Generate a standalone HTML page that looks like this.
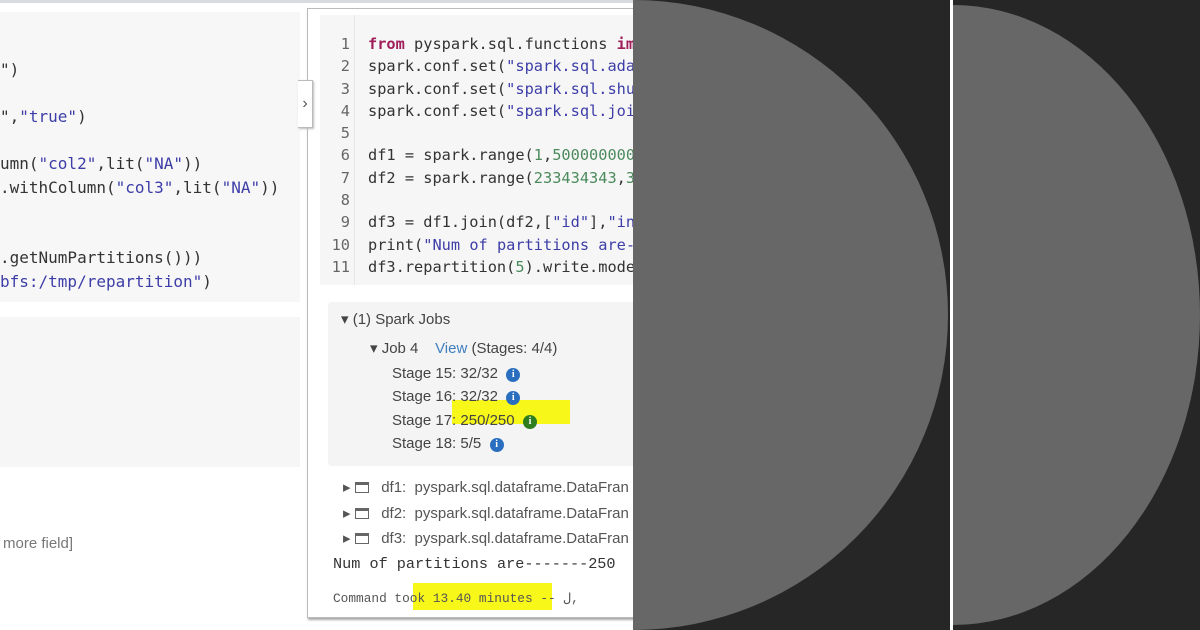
<!DOCTYPE html>
<html><head><meta charset="utf-8"><style>
*{margin:0;padding:0;box-sizing:border-box}
body{width:1200px;height:630px;overflow:hidden;background:#fff;position:relative;font-family:"DejaVu Sans Mono","Liberation Mono",monospace}
.abs{position:absolute;white-space:pre}
.mono{font-family:"DejaVu Sans Mono","Liberation Mono",monospace;font-size:15.3px;color:#333;letter-spacing:0px}
.sans{font-family:"Liberation Sans",sans-serif;font-size:15px;color:#444}
.s{color:#3d3da8}.n{color:#4b8a5c}.k{color:#a01e5a;font-weight:bold}
.info{display:inline-block;width:14px;height:14px;border-radius:50%;background:#2a6fbf;color:#fff;font:bold 10px "Liberation Serif",serif;text-align:center;line-height:14px;vertical-align:1px}
</style></head><body>
<div class="abs" style="left:0;top:0;width:640px;height:3px;background:#d8dce0"></div>
<div class="abs" style="left:0;top:12px;width:300px;height:290px;background:#f7f7f7"></div>
<div class="abs" style="left:0;top:317px;width:300px;height:150px;background:#f6f6f6"></div>
<div class="abs mono" style="left:0;top:58px;line-height:23.5px;font-size:16px">"<span></span>)
&nbsp;
",<span class="s">"true"</span>)
&nbsp;
umn(<span class="s">"col2"</span>,lit(<span class="s">"NA"</span>))
.withColumn(<span class="s">"col3"</span>,lit(<span class="s">"NA"</span>))
&nbsp;
&nbsp;
.getNumPartitions()))
<span class="s">bfs:/tmp/repartition"</span>)</div>
<div class="abs sans" style="left:3px;top:535px;color:#777">more field]</div>

<div class="abs" style="left:307px;top:8px;width:340px;height:610px;border:1px solid #bbb;box-shadow:1px 2px 2px #aaa;background:#fff"></div>
<div class="abs" style="left:298px;top:80px;width:15px;height:48px;background:#fff;border:1px solid #bbb;border-left:none;box-shadow:1px 1px 2px #bbb;font:16px 'Liberation Sans';color:#555;text-align:center;line-height:46px">›</div>
<div class="abs" style="left:320px;top:15px;width:320px;height:270px;background:#f6f6f6"></div>
<div class="abs" style="left:354px;top:15px;width:1px;height:270px;background:#e6e6e6"></div>
<div class="abs mono" style="left:330px;top:33px;line-height:22.3px;color:#666;text-align:right;width:20px">1
2
3
4
5
6
7
8
9
10
11</div>
<div class="abs mono" style="left:368px;top:33px;line-height:22.3px"><span class="k">from</span> pyspark.sql.functions <span class="k">im</span>
spark.conf.set(<span class="s">"spark.sql.ada</span>
spark.conf.set(<span class="s">"spark.sql.shu</span>
spark.conf.set(<span class="s">"spark.sql.joi</span>
&nbsp;
df1 = spark.range(<span class="n">1</span>,<span class="n">500000000</span>
df2 = spark.range(<span class="n">233434343</span>,<span class="n">3</span>
&nbsp;
df3 = df1.join(df2,[<span class="s">"id"</span>],<span class="s">"in</span>
print(<span class="s">"Num of partitions are-</span>
df3.repartition(<span class="n">5</span>).write.mode</div>

<div class="abs" style="left:328px;top:302px;width:312px;height:164px;background:#f4f4f4;border-radius:4px"></div>
<div class="abs" style="left:452px;top:400px;width:118px;height:24px;background:#f7f71a"></div>
<div class="abs" style="left:413px;top:583px;width:139px;height:27px;background:#f7f71a"></div>
<div class="abs sans" style="left:341px;top:310px">▾ (1) Spark Jobs</div>
<div class="abs sans" style="left:370px;top:339px">▾ Job 4    <span style="color:#3f7fbf">View</span> (Stages: 4/4)</div>
<div class="abs sans" style="left:392px;top:362px;line-height:23.3px">Stage 15: 32/32  <span class="info">i</span>
Stage 16: 32/32  <span class="info">i</span>
Stage 17: 250/250  <span class="info" style="background:#2e7d1e">i</span>
Stage 18: 5/5  <span class="info">i</span></div>
<div class="abs sans" style="left:343px;top:475px;line-height:25.7px;color:#555">▸ <span style="display:inline-block;width:14px;height:11px;border:1px solid #666;border-top-width:3px;vertical-align:-1px"></span>   df1:  pyspark.sql.dataframe.DataFran
▸ <span style="display:inline-block;width:14px;height:11px;border:1px solid #666;border-top-width:3px;vertical-align:-1px"></span>   df2:  pyspark.sql.dataframe.DataFran
▸ <span style="display:inline-block;width:14px;height:11px;border:1px solid #666;border-top-width:3px;vertical-align:-1px"></span>   df3:  pyspark.sql.dataframe.DataFran</div>
<div class="abs" style="left:333px;top:555px;font:15.2px 'Liberation Mono',monospace;color:#333">Num of partitions are-------250</div>
<div class="abs" style="left:333px;top:591px;font:12.8px 'Liberation Mono',monospace;color:#555">Command took 13.40 minutes -- ل,</div>

<div class="abs" style="left:633px;top:0;width:317px;height:630px;background:#262626;overflow:hidden">
<div class="abs" style="left:-315px;top:0;width:630px;height:630px;border-radius:50%;background:#676767"></div></div>
<div class="abs" style="left:953px;top:0;width:247px;height:630px;background:#262626;overflow:hidden">
<div class="abs" style="left:-247px;top:5px;width:494px;height:620px;border-radius:50%;background:#676767"></div></div>
</body></html>
